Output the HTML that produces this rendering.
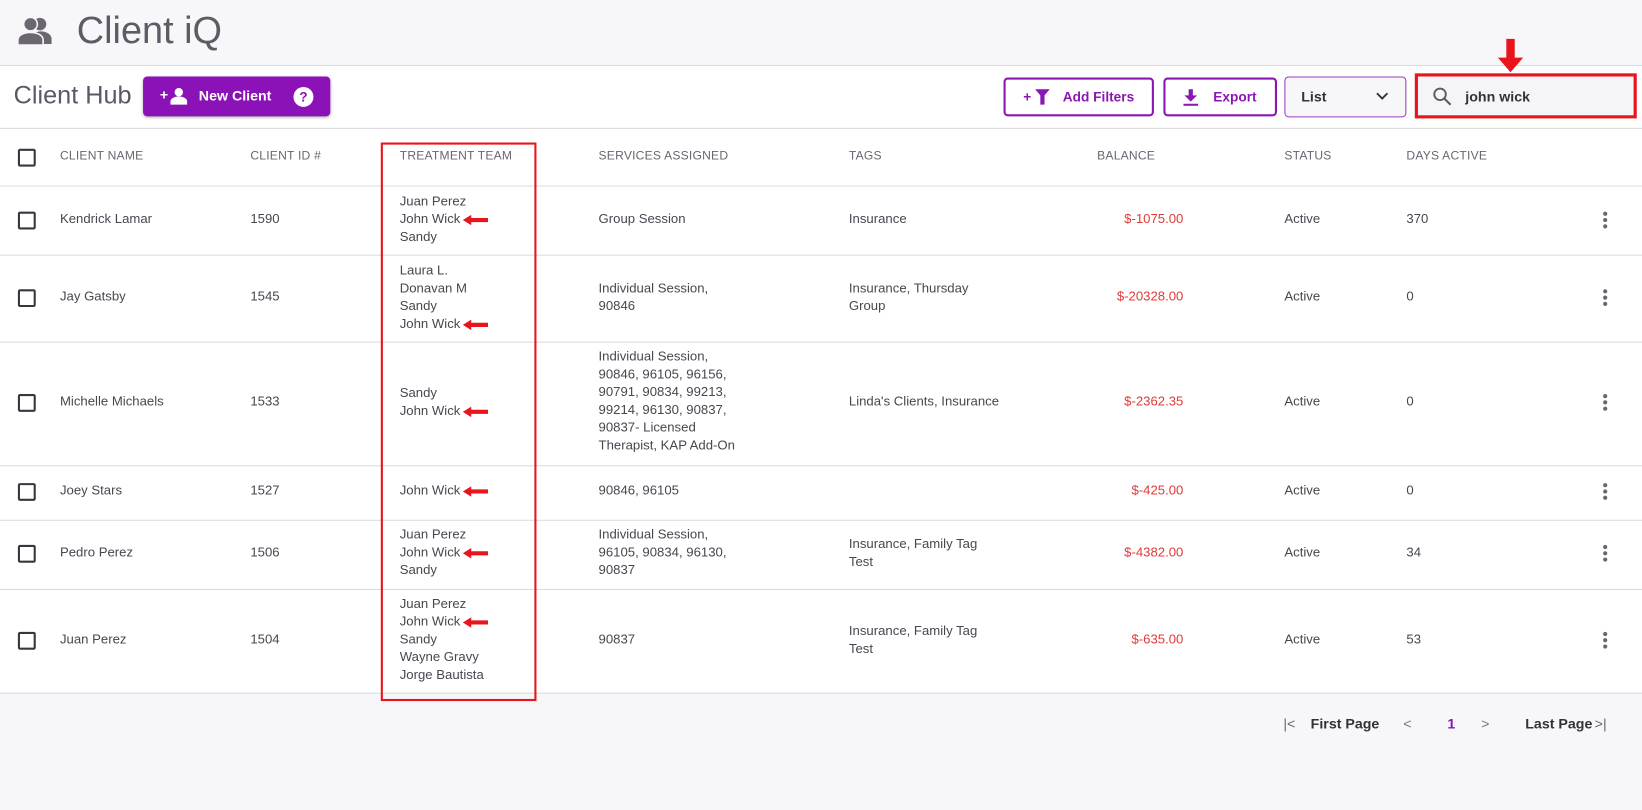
<!DOCTYPE html>
<html><head><meta charset="utf-8"><style>
html,body{margin:0;padding:0;width:1642px;height:810px;overflow:hidden;background:#f7f6f9}
#w{position:absolute;left:0;top:0;width:1561px;height:773px;transform:scale(1.0519,1.0479);transform-origin:0 0;font-family:"Liberation Sans",sans-serif;color:#4a4550;font-size:12.5px}
.a{position:absolute}
.hdr{left:0;top:0;width:1561px;height:62px;background:#f7f6f9;border-bottom:1px solid #dcdadf}
.main{left:0;top:63px;width:1561px;height:598px;background:#fff}
.line{position:absolute;left:0;width:1561px;height:1px;background:#dcdadf}
.cb{position:absolute;left:17px;width:13px;height:13px;border:2px solid #3a3640;border-radius:2px}
.th{position:absolute;top:143px;font-size:11.5px;color:#6a6570;letter-spacing:.2px}
.t{position:absolute;line-height:17px;white-space:nowrap}
.red{color:#e03a3a}
.btn{position:absolute;border:2px solid #8a17b3;border-radius:4px;color:#8a17b3;font-weight:bold;font-size:13px;box-sizing:border-box;display:flex;align-items:center;justify-content:center}
.dots{position:absolute;left:1524px;width:4px}
.dots i{display:block;width:4px;height:4px;border-radius:2px;background:#6a6570;margin-bottom:2px}
.arr{display:inline-block;vertical-align:middle;margin-left:2px}
</style></head><body><div id="w">
<div class="a hdr"></div>
<svg class="a" style="left:16px;top:14px" width="36" height="30" viewBox="0 0 36 30"><circle cx="22" cy="9" r="6" fill="#6b6670"/><path d="M14 28v-5c0-4 4-7 9-7s10 3 10 7v5z" fill="#6b6670"/><circle cx="13" cy="9" r="6.5" fill="#6b6670" stroke="#f7f6f9" stroke-width="1.5"/><path d="M1 29v-5c0-4 5-7 12-7s12 3 12 7v5z" fill="#6b6670" stroke="#f7f6f9" stroke-width="1.5"/></svg>
<div class="a" style="left:73px;top:8px;font-size:36px;color:#5f5a66">Client iQ</div>
<div class="a main"></div>
<div class="a" style="left:13px;top:78px;font-size:24px;color:#5c5766">Client Hub</div>
<div class="a" style="left:136px;top:73px;width:178px;height:38px;background:#8b12b6;border-radius:4px;box-shadow:0 1px 3px rgba(0,0,0,.3);color:#fff;font-weight:bold;font-size:13.5px">
<span class="a" style="left:16px;top:10px">+</span>
<svg class="a" style="left:26px;top:10px" width="16" height="17" viewBox="0 0 16 17"><circle cx="8" cy="5" r="4" fill="#fff"/><path d="M0 17v-3c0-3 4-5 8-5s8 2 8 5v3z" fill="#fff"/></svg>
<span class="a" style="left:53px;top:11px">New Client</span>
<span class="a" style="left:143px;top:10px;width:19px;height:19px;border-radius:50%;background:#fff;color:#8b12b6;text-align:center;line-height:19px;font-size:13px">?</span></div>
<div class="btn" style="left:954px;top:74px;width:143px;height:37px"><span style="margin-right:4px">+</span><svg width="14" height="15" viewBox="0 0 14 15" style="margin-right:12px"><path d="M0 0h14l-5 6v9h-4v-9z" fill="#8a17b3"/></svg>Add Filters</div>
<div class="btn" style="left:1106px;top:74px;width:108px;height:37px"><svg width="14" height="16" viewBox="0 0 14 16" style="margin-right:14px"><path d="M5 0h4v6h4l-6 6-6-6h4z M0 14h14v2h-14z" fill="#8a17b3"/></svg>Export</div>
<div class="a" style="left:1221px;top:73px;width:116px;height:39px;border:1px solid #9a3cc0;border-radius:4px;background:#f7f6f9;box-sizing:border-box"><span class="a" style="left:15px;top:11px;font-size:13.5px;color:#333;font-weight:bold">List</span><svg class="a" style="left:86px;top:14px" width="12" height="8" viewBox="0 0 12 8"><path d="M1 1l5 5 5-5" stroke="#333" stroke-width="1.8" fill="none"/></svg></div>
<div class="a" style="left:1345px;top:70px;width:211px;height:43px;border:3px solid #e8161c;background:#f5f4f7;box-sizing:border-box"><svg class="a" style="left:14px;top:10px" width="18" height="18" viewBox="0 0 18 18"><circle cx="7" cy="7" r="5.5" stroke="#5e5864" stroke-width="1.8" fill="none"/><path d="M11 11l6 6" stroke="#5e5864" stroke-width="2"/></svg><span class="a" style="left:45px;top:12px;font-size:13.5px;color:#333;font-weight:bold">john wick</span></div>
<svg class="a" style="left:1424px;top:37px" width="24" height="32" viewBox="0 0 24 32"><path d="M8 0h8v18h8l-12 14-12-14h8z" fill="#e8161c"/></svg>
<div class="line" style="top:122px"></div>
<div class="cb" style="top:142px"></div>
<div class="th" style="left:57px">CLIENT NAME</div><div class="th" style="left:238px">CLIENT ID #</div><div class="th" style="left:380px">TREATMENT TEAM</div><div class="th" style="left:569px">SERVICES ASSIGNED</div><div class="th" style="left:807px">TAGS</div><div class="th" style="left:1043px">BALANCE</div><div class="th" style="left:1221px">STATUS</div><div class="th" style="left:1337px">DAYS ACTIVE</div>
<div class="line" style="top:177px"></div>
<div class="line" style="top:243px"></div><div class="line" style="top:326px"></div><div class="line" style="top:444px"></div><div class="line" style="top:496px"></div><div class="line" style="top:562px"></div><div class="line" style="top:661px"></div>

<!-- row 1 center 210 -->
<div class="cb" style="top:202px"></div><div class="t" style="left:57px;top:201px">Kendrick Lamar</div><div class="t" style="left:238px;top:201px">1590</div>
<div class="t" style="left:380px;top:184px">Juan Perez<br>John Wick<svg class="arr" width="24" height="10" viewBox="0 0 24 10"><path d="M0 5l8-5v3h16v4h-16v3z" fill="#e8161c"/></svg><br>Sandy</div>
<div class="t" style="left:569px;top:201px">Group Session</div><div class="t" style="left:807px;top:201px">Insurance</div><div class="t red" style="right:436px;top:201px">$-1075.00</div><div class="t" style="left:1221px;top:201px">Active</div><div class="t" style="left:1337px;top:201px">370</div>
<div class="dots" style="top:202px"><i></i><i></i><i></i></div>
<!-- row 2 center 284 -->
<div class="cb" style="top:276px"></div><div class="t" style="left:57px;top:275px">Jay Gatsby</div><div class="t" style="left:238px;top:275px">1545</div>
<div class="t" style="left:380px;top:250px">Laura L.<br>Donavan M<br>Sandy<br>John Wick<svg class="arr" width="24" height="10" viewBox="0 0 24 10"><path d="M0 5l8-5v3h16v4h-16v3z" fill="#e8161c"/></svg></div>
<div class="t" style="left:569px;top:267px">Individual Session,<br>90846</div><div class="t" style="left:807px;top:267px">Insurance, Thursday<br>Group</div><div class="t red" style="right:436px;top:275px">$-20328.00</div><div class="t" style="left:1221px;top:275px">Active</div><div class="t" style="left:1337px;top:275px">0</div>
<div class="dots" style="top:276px"><i></i><i></i><i></i></div>
<!-- row 3 center 384 -->
<div class="cb" style="top:376px"></div><div class="t" style="left:57px;top:375px">Michelle Michaels</div><div class="t" style="left:238px;top:375px">1533</div>
<div class="t" style="left:380px;top:367px">Sandy<br>John Wick<svg class="arr" width="24" height="10" viewBox="0 0 24 10"><path d="M0 5l8-5v3h16v4h-16v3z" fill="#e8161c"/></svg></div>
<div class="t" style="left:569px;top:332px">Individual Session,<br>90846, 96105, 96156,<br>90791, 90834, 99213,<br>99214, 96130, 90837,<br>90837- Licensed<br>Therapist, KAP Add-On</div>
<div class="t" style="left:807px;top:375px">Linda's Clients, Insurance</div><div class="t red" style="right:436px;top:375px">$-2362.35</div><div class="t" style="left:1221px;top:375px">Active</div><div class="t" style="left:1337px;top:375px">0</div>
<div class="dots" style="top:376px"><i></i><i></i><i></i></div>
<!-- row 4 center 469 -->
<div class="cb" style="top:461px"></div><div class="t" style="left:57px;top:460px">Joey Stars</div><div class="t" style="left:238px;top:460px">1527</div>
<div class="t" style="left:380px;top:460px">John Wick<svg class="arr" width="24" height="10" viewBox="0 0 24 10"><path d="M0 5l8-5v3h16v4h-16v3z" fill="#e8161c"/></svg></div>
<div class="t" style="left:569px;top:460px">90846, 96105</div><div class="t red" style="right:436px;top:460px">$-425.00</div><div class="t" style="left:1221px;top:460px">Active</div><div class="t" style="left:1337px;top:460px">0</div>
<div class="dots" style="top:461px"><i></i><i></i><i></i></div>
<!-- row 5 center 528 -->
<div class="cb" style="top:520px"></div><div class="t" style="left:57px;top:519px">Pedro Perez</div><div class="t" style="left:238px;top:519px">1506</div>
<div class="t" style="left:380px;top:502px">Juan Perez<br>John Wick<svg class="arr" width="24" height="10" viewBox="0 0 24 10"><path d="M0 5l8-5v3h16v4h-16v3z" fill="#e8161c"/></svg><br>Sandy</div>
<div class="t" style="left:569px;top:502px">Individual Session,<br>96105, 90834, 96130,<br>90837</div><div class="t" style="left:807px;top:511px">Insurance, Family Tag<br>Test</div><div class="t red" style="right:436px;top:519px">$-4382.00</div><div class="t" style="left:1221px;top:519px">Active</div><div class="t" style="left:1337px;top:519px">34</div>
<div class="dots" style="top:520px"><i></i><i></i><i></i></div>
<!-- row 6 center 611 -->
<div class="cb" style="top:603px"></div><div class="t" style="left:57px;top:602px">Juan Perez</div><div class="t" style="left:238px;top:602px">1504</div>
<div class="t" style="left:380px;top:568px">Juan Perez<br>John Wick<svg class="arr" width="24" height="10" viewBox="0 0 24 10"><path d="M0 5l8-5v3h16v4h-16v3z" fill="#e8161c"/></svg><br>Sandy<br>Wayne Gravy<br>Jorge Bautista</div>
<div class="t" style="left:569px;top:602px">90837</div><div class="t" style="left:807px;top:594px">Insurance, Family Tag<br>Test</div><div class="t red" style="right:436px;top:602px">$-635.00</div><div class="t" style="left:1221px;top:602px">Active</div><div class="t" style="left:1337px;top:602px">53</div>
<div class="dots" style="top:603px"><i></i><i></i><i></i></div>

<div class="a" style="left:362px;top:136px;width:144px;height:529px;border:2px solid #e8161c"></div>
<div class="a" style="left:1220px;top:683px;font-size:13.5px;color:#333;white-space:nowrap"><span style="color:#666">|&lt;</span><span style="position:absolute;left:26px;font-weight:bold">First Page</span><span style="position:absolute;left:114px;color:#777">&lt;</span><span style="position:absolute;left:156px;color:#8a17b3;font-weight:bold">1</span><span style="position:absolute;left:188px;color:#777">&gt;</span><span style="position:absolute;left:230px;font-weight:bold">Last Page</span><span style="position:absolute;left:296px;color:#666">&gt;|</span></div>
</div></body></html>
